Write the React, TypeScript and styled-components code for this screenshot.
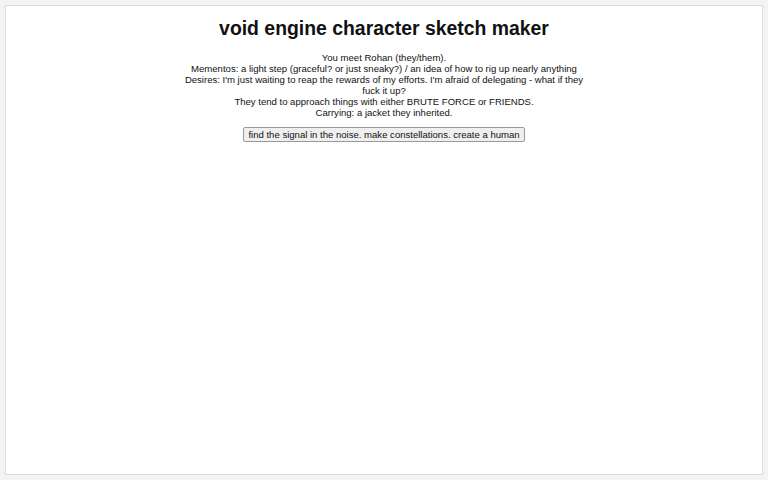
import styled, { createGlobalStyle } from "styled-components";

const GlobalStyle = createGlobalStyle`
  html, body {
    margin: 0;
    padding: 0;
    background: #f3f3f3;
  }
  body {
    font-family: "Liberation Sans", Arial, sans-serif;
    color: #111;
  }
`;

const Page = styled.div`
  padding: 5px;
  height: 480px;
  box-sizing: border-box;
`;

const Card = styled.main`
  height: 100%;
  box-sizing: border-box;
  background: #fff;
  border: 1px solid #dcdcdc;
  display: flex;
  flex-direction: column;
  align-items: center;
  padding-top: 10px;
`;

const Title = styled.h1`
  margin: 0;
  font-size: 19.4px;
  line-height: 24px;
  font-weight: bold;
`;

const Sketch = styled.div`
  width: 400px;
  margin-top: 12px;
  text-align: center;
  font-size: 9.55px;
  line-height: 11px;
`;

const Line = styled.div``;

const MakeButton = styled.button`
  margin-top: 9px;
  font-family: "Liberation Sans", Arial, sans-serif;
  font-size: 9.55px;
  line-height: 11px;
  padding: 1px 4px;
  color: #111;
  background: #efefef;
  border: 1px solid #999;
  border-radius: 2px;
`;

export default function App() {
  return (
    <>
      <GlobalStyle />
      <Page>
        <Card>
          <Title>void engine character sketch maker</Title>
          <Sketch>
            <Line>You meet Rohan (they/them).</Line>
            <Line>
              Mementos: a light step (graceful? or just sneaky?) / an idea of how
              to rig up nearly anything
            </Line>
            <Line>
              Desires: I'm just waiting to reap the rewards of my efforts. I'm
              afraid of delegating - what if they fuck it up?
            </Line>
            <Line>
              They tend to approach things with either BRUTE FORCE or FRIENDS.
            </Line>
            <Line>Carrying: a jacket they inherited.</Line>
          </Sketch>
          <MakeButton>
            find the signal in the noise. make constellations. create a human
          </MakeButton>
        </Card>
      </Page>
    </>
  );
}
